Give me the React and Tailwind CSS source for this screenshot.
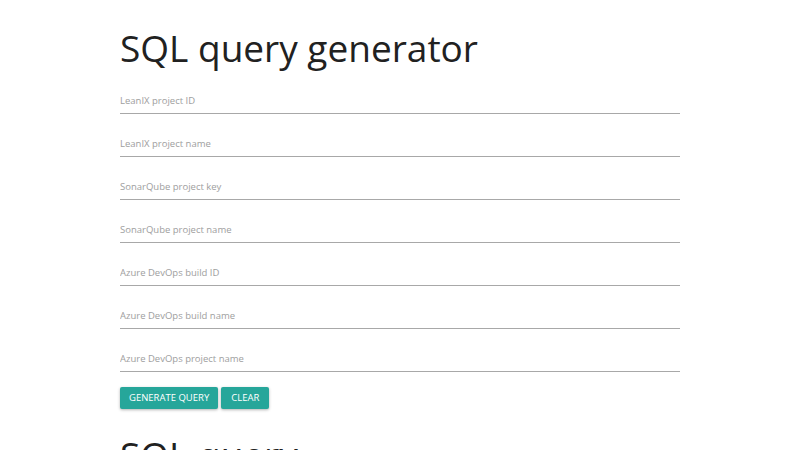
const fields = [
  "LeanIX project ID",
  "LeanIX project name",
  "SonarQube project key",
  "SonarQube project name",
  "Azure DevOps build ID",
  "Azure DevOps build name",
  "Azure DevOps project name",
];

export default function App() {
  return (
    <div
      className="h-screen overflow-hidden bg-white text-[#212121]"
      style={{ fontFamily: '"Open Sans", "Noto Sans", sans-serif' }}
    >
      <div className="w-[560px] mx-auto">
        <h1 className="pt-[25px] text-[37px] leading-[46px] font-normal">SQL query generator</h1>
        <form>
          {fields.map((f) => (
            <div key={f} className="h-[43px] flex items-end">
              <input
                placeholder={f}
                className="w-full h-[27px] border-b border-[#a8a8a8] text-[9.5px] outline-none placeholder:text-[#9e9e9e] bg-transparent"
              />
            </div>
          ))}
          <div className="flex gap-[3px] mt-[15px]">
            <button
              type="button"
              className="h-[22px] px-[9px] bg-[#26a69a] text-white text-[9.5px] uppercase rounded-[2px] shadow-[0_1px_3px_rgba(0,0,0,0.3)]"
            >
              Generate query
            </button>
            <button
              type="button"
              className="h-[22px] px-[10px] bg-[#26a69a] text-white text-[9.5px] uppercase rounded-[2px] shadow-[0_1px_3px_rgba(0,0,0,0.3)]"
            >
              Clear
            </button>
          </div>
        </form>
        <h2 className="mt-[23px] text-[37px] leading-[46px] font-normal">SQL query</h2>
      </div>
    </div>
  );
}
